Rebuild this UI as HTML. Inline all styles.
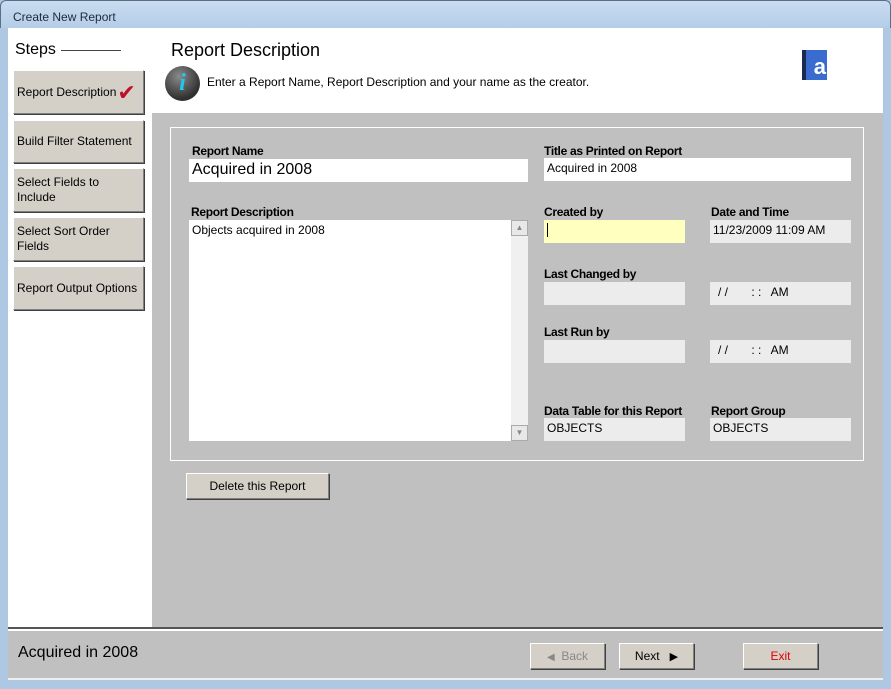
<!DOCTYPE html>
<html><head><style>
*{margin:0;padding:0;box-sizing:border-box}
body{width:891px;height:689px;background:#aec8e4;font-family:"Liberation Sans",sans-serif;position:relative;overflow:hidden;font-size:12px;color:#000}
.a{position:absolute}
.title{left:0;top:0;width:891px;height:28px;background:linear-gradient(#c9dcf0,#b4cde8);border:1px solid #5a6f86;border-bottom:none;border-radius:6px 6px 0 0}
.btn{position:absolute;background:#d4d0c8;border:1px solid;border-color:#fff #808080 #808080 #fff;box-shadow:1px 1px 0 #404040;font-size:12px}
.step{left:13px;width:131px;padding-left:3px;padding-right:14px;display:flex;align-items:center;line-height:15px}
.lbl{position:absolute;font-size:12px;font-weight:bold;letter-spacing:-0.3px}
.fld{position:absolute;background:#ececec;font-size:12px;padding:3px 3px;height:23px}
</style></head><body>
<div class="a title"></div>
<div class="a" style="left:13px;top:10px;font-size:12px;color:#1e2a3a">Create New Report</div>
<div class="a" style="left:8px;top:28px;width:875px;height:652px;background:#c0c0c0"></div>
<div class="a" style="left:8px;top:28px;width:144px;height:600px;background:#fff"></div>
<div class="a" style="left:152px;top:28px;width:731px;height:85px;background:#fff"></div>
<div class="a" style="left:15px;top:41px;font-size:16px">Steps</div>
<div class="a" style="left:61px;top:50px;width:60px;height:1px;background:#444"></div>
<div class="btn step" style="top:70px;height:44px;padding-right:0">Report Description<span style="color:#c0102a;font-size:22px;margin-left:1px">✔</span></div>
<div class="btn step" style="top:120px;height:43px;padding-right:0">Build Filter Statement</div>
<div class="btn step" style="top:168px;height:44px">Select Fields to Include</div>
<div class="btn step" style="top:217px;height:44px">Select Sort Order Fields</div>
<div class="btn step" style="top:266px;height:44px;padding-right:0">Report Output Options</div>
<div class="a" style="left:171px;top:40px;font-size:18px">Report Description</div>
<div class="a" style="left:165px;top:66px;width:35px;height:35px;border-radius:50%;background:radial-gradient(circle at 40% 30%,#8a8a8a,#303030 70%);color:#1ec8f0;font:italic bold 24px 'Liberation Serif',serif;text-align:center;line-height:35px">i</div>
<div class="a" style="left:207px;top:75px;font-size:12px">Enter a Report Name, Report Description and your name as the creator.</div>
<div class="a" style="left:802px;top:50px;width:25px;height:30px;background:#3a6cd0;border-left:4px solid #1a2a50;color:#fff;font-weight:bold;font-size:22px;line-height:34px;text-align:right;padding-right:1px">a</div>
<div class="a" style="left:170px;top:127px;width:694px;height:334px;border:1px solid #fff"></div>
<div class="lbl" style="left:192px;top:144px">Report Name</div>
<div class="a" style="left:189px;top:159px;width:339px;height:23px;background:#fff;font-size:16px;padding:2px 3px">Acquired in 2008</div>
<div class="lbl" style="left:191px;top:205px">Report Description</div>
<div class="a" style="left:189px;top:220px;width:339px;height:221px;background:#fff;padding:3px 3px">Objects acquired in 2008</div>
<div class="a" style="left:511px;top:220px;width:17px;height:221px;background:#f0f0f0"></div>
<div class="a" style="left:511px;top:220px;width:17px;height:16px;border:1px solid #aaa;background:#e8e8e8;font-size:8px;text-align:center;color:#888;line-height:14px">▲</div>
<div class="a" style="left:511px;top:425px;width:17px;height:16px;border:1px solid #aaa;background:#e8e8e8;font-size:8px;text-align:center;color:#888;line-height:14px">▼</div>
<div class="lbl" style="left:544px;top:144px">Title as Printed on Report</div>
<div class="a" style="left:544px;top:158px;width:307px;height:23px;background:#fff;padding:3px 3px">Acquired in 2008</div>
<div class="lbl" style="left:544px;top:205px">Created by</div>
<div class="fld" style="left:544px;top:220px;width:141px;background:#ffffc0"><span style="display:inline-block;width:1px;height:14px;background:#000"></span></div>
<div class="lbl" style="left:711px;top:205px">Date and Time</div>
<div class="fld" style="left:710px;top:220px;width:141px">11/23/2009 11:09 AM</div>
<div class="lbl" style="left:544px;top:267px">Last Changed by</div>
<div class="fld" style="left:544px;top:282px;width:141px"></div>
<div class="fld" style="left:710px;top:282px;width:141px;padding-left:8px">/ /&nbsp;&nbsp;&nbsp;&nbsp;&nbsp;&nbsp; : :&nbsp;&nbsp; AM</div>
<div class="lbl" style="left:544px;top:325px">Last Run by</div>
<div class="fld" style="left:544px;top:340px;width:141px"></div>
<div class="fld" style="left:710px;top:340px;width:141px;padding-left:8px">/ /&nbsp;&nbsp;&nbsp;&nbsp;&nbsp;&nbsp; : :&nbsp;&nbsp; AM</div>
<div class="lbl" style="left:544px;top:404px">Data Table for this Report</div>
<div class="fld" style="left:544px;top:418px;width:141px">OBJECTS</div>
<div class="lbl" style="left:711px;top:404px">Report Group</div>
<div class="fld" style="left:710px;top:418px;width:141px">OBJECTS</div>
<div class="btn" style="left:186px;top:473px;width:143px;height:26px;text-align:center;line-height:24px">Delete this Report</div>
<div class="a" style="left:8px;top:627px;width:875px;height:2px;background:#555"></div>
<div class="a" style="left:8px;top:629px;width:875px;height:2px;background:#fff"></div>
<div class="a" style="left:8px;top:631px;width:875px;height:47px;background:#c0c0c0"></div>
<div class="a" style="left:18px;top:644px;font-size:16px">Acquired in 2008</div>
<div class="btn" style="left:530px;top:643px;width:75px;height:26px;text-align:center;line-height:24px;color:#888"><span style="font-size:10px">◀</span>&nbsp; Back</div>
<div class="btn" style="left:619px;top:643px;width:75px;height:26px;text-align:center;line-height:24px">Next&nbsp;&nbsp; <span style="font-size:11px">▶</span></div>
<div class="btn" style="left:743px;top:643px;width:75px;height:26px;text-align:center;line-height:24px;color:#e00000">Exit</div>
<div class="a" style="left:8px;top:678px;width:875px;height:2px;background:#eee"></div>
</body></html>
